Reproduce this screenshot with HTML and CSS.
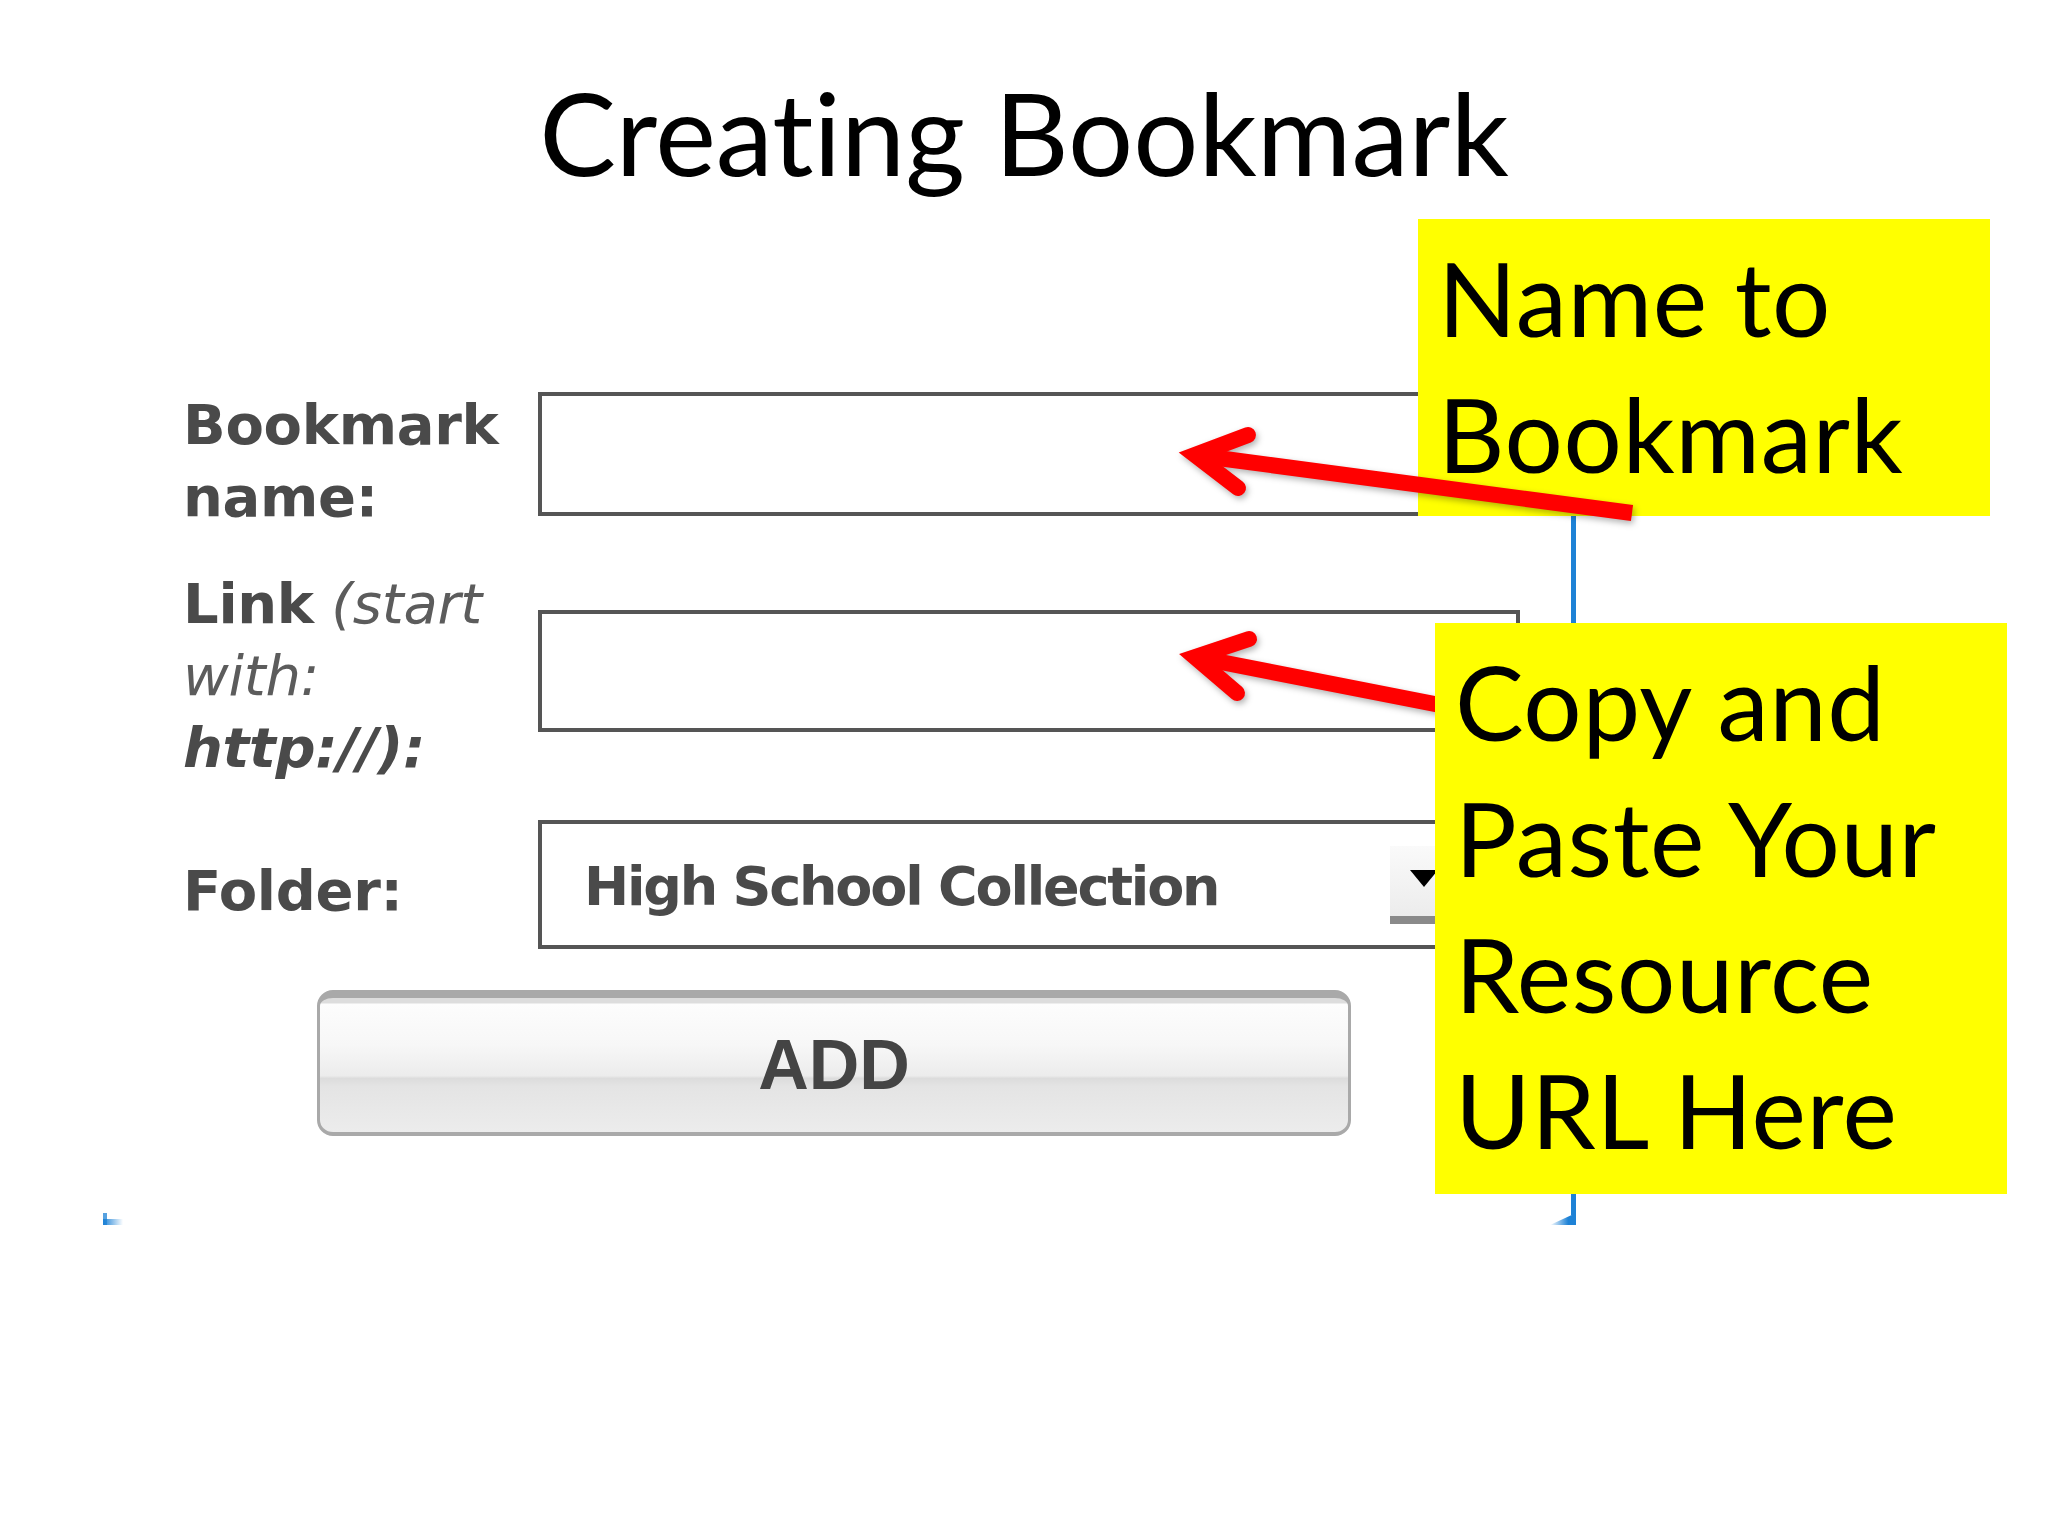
FILE: index.html
```html
<!DOCTYPE html>
<html lang="en">
<head>
<meta charset="utf-8">
<title>Creating Bookmark</title>
<link rel="stylesheet" href="styles.css">
</head>
<body>
<div class="slide">
  <h1 class="title">Creating Bookmark</h1>

  <main class="form">
    <div class="row row-name">
      <div class="label"><b>Bookmark</b><br><b>name:</b></div>
      <div class="field field-name"></div>
    </div>
    <div class="row row-link">
      <div class="label"><b>Link</b> <i class="soft">(start</i><br><i class="soft">with:</i><br><b><i>http://):</i></b></div>
      <div class="field field-link"></div>
    </div>
    <div class="row row-folder">
      <div class="label label-folder"><b>Folder:</b></div>
      <div class="select">
        <span class="select-text">High School Collection</span>
        <span class="select-btn"><span class="tri"></span></span>
      </div>
    </div>
    <button class="add" type="button">ADD</button>
  </main>

  <div class="frame-right"></div>
  <div class="frame-corner-right"></div>
  <div class="frame-corner-left"></div>

  <svg class="arrow arrow-two" width="2048" height="1536" viewBox="0 0 2048 1536" aria-hidden="true">
    <line x1="1195" y1="657" x2="1445" y2="706" stroke="#ff0000" stroke-width="16" stroke-linecap="butt"/>
    <polyline points="1249,639 1195,657 1237,693" fill="none" stroke="#ff0000" stroke-width="16" stroke-linecap="round" stroke-linejoin="miter" stroke-miterlimit="10"/>
  </svg>

  <div class="callout callout-one">Name to<br>Bookmark</div>
  <div class="callout callout-two">Copy and<br>Paste Your<br>Resource<br>URL Here</div>

  <svg class="arrow arrow-one" width="2048" height="1536" viewBox="0 0 2048 1536" aria-hidden="true">
    <line x1="1195" y1="455" x2="1632" y2="513" stroke="#ff0000" stroke-width="16" stroke-linecap="butt"/>
    <polyline points="1248,435 1195,455 1238,488" fill="none" stroke="#ff0000" stroke-width="16" stroke-linecap="round" stroke-linejoin="miter" stroke-miterlimit="10"/>
  </svg>
</div>
</body>
</html>
```

FILE: styles.css
```css
html, body {
  margin: 0;
  padding: 0;
  background: #ffffff;
}

.slide {
  position: relative;
  width: 2048px;
  height: 1536px;
  overflow: hidden;
  background: #ffffff;
}

.title {
  margin: 62px 0 0 0;
  height: 138px;
  font-family: Lato, "Open Sans", sans-serif;
  font-weight: 400;
  font-size: 115px;
  line-height: 138px;
  text-align: center;
  color: #000000;
  font-variant-ligatures: none;
  font-feature-settings: "liga" 0, "dlig" 0;
}

.form {
  display: flex;
  flex-direction: column;
  margin: 189px 0 0 183px;
  font-family: "DejaVu Sans", Verdana, sans-serif;
}

.row {
  display: grid;
  grid-template-columns: 355px 982px;
  align-items: start;
}

.row-link { margin-top: 35px; }
.row-folder { margin-top: 36px; }

.label {
  font-size: 56px;
  line-height: 72px;
  color: #4a4a4a;
  letter-spacing: -0.3px;
  white-space: nowrap;
}

.label b { font-weight: 700; }

.label .soft {
  font-weight: 400;
  color: #5c5c5c;
}

.label-folder { margin-top: 35px; }

.field {
  box-sizing: border-box;
  border: 4px solid #555555;
  background: #ffffff;
}

.field-name { margin-top: 3px; height: 124px; }
.field-link { margin-top: 42px; height: 122px; }

.select {
  box-sizing: border-box;
  height: 129px;
  border: 4px solid #555555;
  background: #ffffff;
  display: flex;
  align-items: center;
}

.select-text {
  margin-left: 42px;
  padding-top: 4px;
  font-size: 54px;
  line-height: 54px;
  font-weight: 700;
  letter-spacing: -2.2px;
  color: #4a4a4a;
  white-space: nowrap;
}

.select-btn {
  margin-left: auto;
  margin-right: 68px;
  box-sizing: border-box;
  width: 58px;
  height: 78px;
  background: linear-gradient(#fafafa, #ececec);
  border-bottom: 8px solid #8a8a8a;
  display: flex;
  align-items: center;
  justify-content: flex-start;
}

.tri {
  margin-left: 20px;
  margin-top: -4px;
  width: 0;
  height: 0;
  border-left: 14px solid transparent;
  border-right: 14px solid transparent;
  border-top: 17px solid #000000;
}

.add {
  box-sizing: border-box;
  margin: 41px 0 0 134px;
  width: 1034px;
  height: 146px;
  padding: 0;
  border: 3px solid #a9a9a9;
  border-top: 8px solid #a9a9a9;
  border-bottom-width: 4px;
  border-radius: 16px;
  background: linear-gradient(to bottom,
    #dddddd 0px, #dddddd 5px,
    #fdfdfd 6px, #f7f7f7 35%,
    #ececec 58%, #dcdcdc 60%,
    #e4e4e4 66%, #ececec 100%);
  font-family: "Liberation Sans", Arial, sans-serif;
  font-weight: 700;
  font-size: 70px;
  line-height: 70px;
  color: #444444;
  text-align: center;
}

.callout {
  position: absolute;
  box-sizing: border-box;
  background: #ffff00;
  padding: 10px 0 0 20px;
  font-family: Lato, "Open Sans", sans-serif;
  font-size: 103px;
  letter-spacing: 0.6px;
  line-height: 136px;
  color: #000000;
  white-space: nowrap;
  font-variant-ligatures: none;
  z-index: 3;
}

.callout-one {
  left: 1418px;
  top: 219px;
  width: 572px;
  height: 297px;
}

.callout-two {
  left: 1435px;
  top: 623px;
  width: 572px;
  height: 571px;
}

.arrow {
  position: absolute;
  left: 0;
  top: 0;
  pointer-events: none;
  filter: drop-shadow(2px 3px 3px rgba(0, 0, 0, 0.3));
}

.arrow-two { z-index: 2; }
.arrow-one { z-index: 4; }

.frame-right {
  position: absolute;
  left: 1571px;
  top: 240px;
  width: 5px;
  height: 975px;
  background: #1e82d6;
  z-index: 1;
}

.frame-corner-right {
  position: absolute;
  left: 1550px;
  top: 1213px;
  width: 26px;
  height: 12px;
  background: linear-gradient(to right, rgba(30, 130, 214, 0) 0%, #1e82d6 70%);
  clip-path: polygon(100% 0, 100% 100%, 0 100%);
  z-index: 1;
}

.frame-corner-left {
  position: absolute;
  left: 103px;
  top: 1213px;
  width: 20px;
  height: 12px;
  z-index: 1;
}

.frame-corner-left::before {
  content: "";
  position: absolute;
  left: 0;
  top: 0;
  width: 4px;
  height: 12px;
  background: rgba(30, 130, 214, 0.75);
}

.frame-corner-left::after {
  content: "";
  position: absolute;
  left: 0;
  top: 6px;
  width: 20px;
  height: 6px;
  background: linear-gradient(to right, #1e82d6, rgba(30, 130, 214, 0));
}
```
